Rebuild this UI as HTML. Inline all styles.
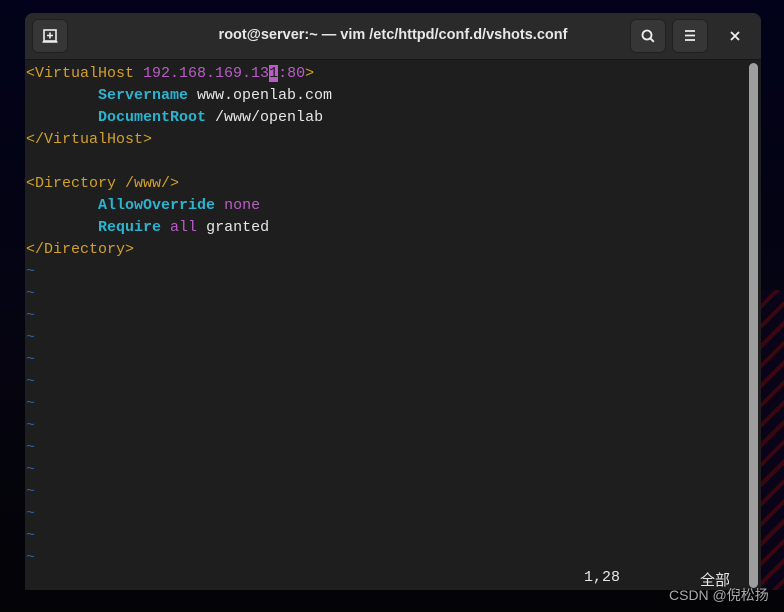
<!DOCTYPE html>
<html><head><meta charset="utf-8"><style>
body{margin:0;width:784px;height:612px;background:linear-gradient(#02021a,#050410 60%,#040306);position:relative;overflow:hidden;font-family:"Liberation Sans",sans-serif}
.stripes{position:absolute;left:755px;top:290px;width:40px;height:300px;background:repeating-linear-gradient(135deg,#3a0610 0 4px,#0a0418 4px 14px)}
.win{position:absolute;left:25px;top:13px;width:736px;height:577px;background:#1e1e1e;border-radius:8px 8px 0 0;overflow:hidden}
.hdr{height:46px;background:#2a2a2a;border-bottom:1px solid #151515;position:relative}
.btn{position:absolute;top:6px;width:34px;height:32px;background:#363636;border-radius:6px;border:1px solid #202020}
.title{position:absolute;left:0;right:0;top:14px;text-align:center;color:#e8e8e8;font-weight:bold;font-size:14.5px}
.code{position:absolute;left:1px;top:50px;font-family:"Liberation Mono",monospace;font-size:15px;line-height:22px;color:#e6e6e6;white-space:pre}
.o{color:#d1a12c}.m{color:#b95dc6}.c{color:#2bb3d0;font-weight:bold}.t{color:#2a5fb0}
.cur{background:#b95dc6;color:#1e1e1e}
.sb{position:absolute;left:724px;top:50px;width:9px;height:525px;background:#9e9e9e;border-radius:5px}
.st{position:absolute;top:556px;font-family:"Liberation Mono","Noto Sans CJK SC",monospace;font-size:15px;color:#e6e6e6}
.wm{position:absolute;left:669px;top:585px;font-size:14px;color:#aaa;font-family:"Liberation Sans","Noto Sans CJK SC",sans-serif}
</style></head><body>
<div class="stripes"></div>
<div class="win">
<div class="hdr">
<div class="btn" style="left:7px"><svg width="34" height="32" viewBox="0 0 34 32"><rect x="11" y="10" width="12" height="11" fill="none" stroke="#eee" stroke-width="1.6"/><path d="M17 12.5v6M14 15.5h6" stroke="#eee" stroke-width="1.6"/><path d="M9.5 22h15" stroke="#eee" stroke-width="1.6"/></svg></div>
<div class="title">root@server:~ — vim /etc/httpd/conf.d/vshots.conf</div>
<div class="btn" style="left:605px"><svg width="34" height="32" viewBox="0 0 34 32"><circle cx="16" cy="15" r="4.5" fill="none" stroke="#eee" stroke-width="1.8"/><path d="M19.3 18.3l3.5 3.5" stroke="#eee" stroke-width="1.9"/></svg></div>
<div class="btn" style="left:647px"><svg width="34" height="32" viewBox="0 0 34 32"><path d="M12 11h10M12 15.5h10M12 20h10" stroke="#eee" stroke-width="1.8"/></svg></div>
<svg style="position:absolute;left:703px;top:16px" width="14" height="14" viewBox="0 0 14 14"><path d="M3 3l8 8M11 3l-8 8" stroke="#eee" stroke-width="1.9"/></svg>
</div>
<div class="code"><span class="o">&lt;VirtualHost </span><span class="m">192.168.169.13<span class="cur">1</span>:80</span><span class="o">&gt;</span>
        <span class="c">Servername</span> www.openlab.com
        <span class="c">DocumentRoot</span> /www/openlab
<span class="o">&lt;/VirtualHost&gt;</span>

<span class="o">&lt;Directory </span><span class="o">/www/&gt;</span>
        <span class="c">AllowOverride</span> <span class="m">none</span>
        <span class="c">Require</span> <span class="m">all</span> granted
<span class="o">&lt;/Directory&gt;</span>
<span class="t">~
~
~
~
~
~
~
~
~
~
~
~
~
~</span></div>
<div class="sb"></div>
<div class="st" style="left:559px">1,28</div>
<div class="st" style="left:675px">全部</div>
</div>
<div class="wm">CSDN @倪松扬</div>
</body></html>
